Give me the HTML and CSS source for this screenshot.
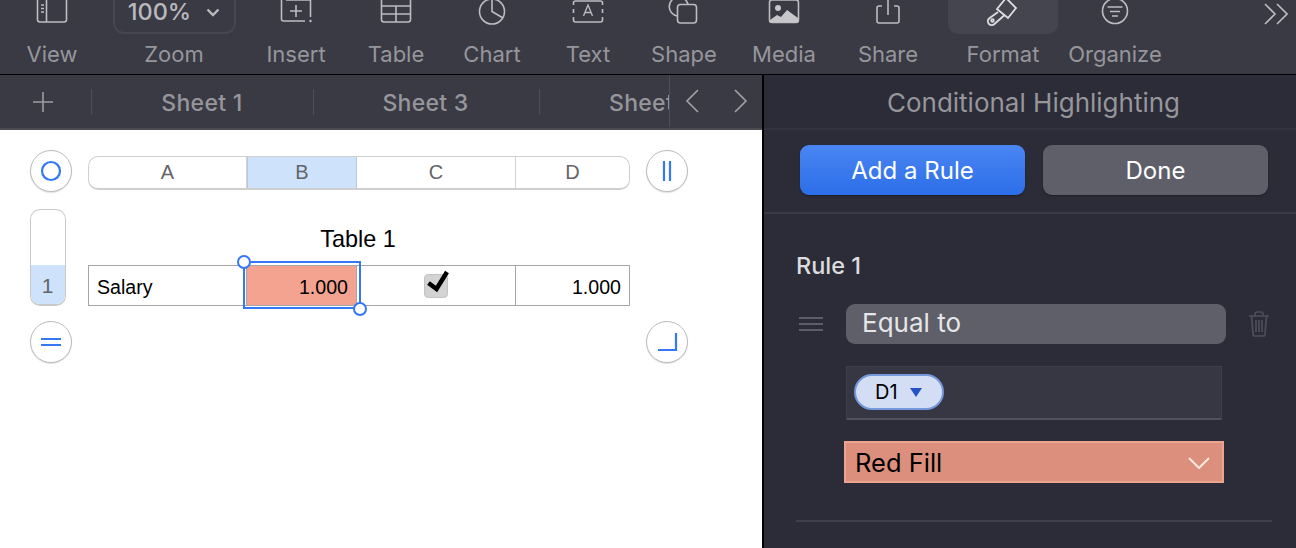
FILE: index.html
```html
<!DOCTYPE html>
<html lang="en">
<head>
<meta charset="utf-8">
<title>Conditional Highlighting</title>
<link rel="stylesheet" href="styles.css">
</head>
<body>
<div class="app">
  <header class="toolbar">
    <div class="tool tool-view"><svg class="ticon" viewBox="0 0 40 34"><rect x="5.5" y="-2" width="29" height="24" rx="2.5"/><path d="M14.5-2V22M9 5h3M9 8.5h3M9 12h3"/></svg><span class="tool-label">View</span></div>
    <div class="tool tool-zoom"><div class="zoom-box"><span class="zoom-value">100%</span><svg class="zoom-chev" viewBox="0 0 14 9"><path d="M1.5 1.5L7 7l5.5-5.5"/></svg></div><span class="tool-label">Zoom</span></div>
    <div class="tool tool-insert"><svg class="ticon" viewBox="0 0 40 34"><path d="M5.500 0V19a2 2 0 0 0 2 2H29M10 0H34M34.500 0V17M14 11H26M20 5V17"/><circle cx="34.500" cy="21" r="1.200" class="fill"/></svg><span class="tool-label">Insert</span></div>
    <div class="tool tool-table"><svg class="ticon" viewBox="0 0 40 34"><rect x="5.500" y="-3" width="29" height="25" rx="2.500"/><path d="M5.500 6H34.500M5.500 14H34.500M20 6V22"/></svg><span class="tool-label">Table</span></div>
    <div class="tool tool-chart"><svg class="ticon" viewBox="0 0 40 34"><circle cx="20" cy="11.500" r="12.500"/><path d="M20-1V11.500L31 18"/></svg><span class="tool-label">Chart</span></div>
    <div class="tool tool-text"><svg class="ticon" viewBox="0 0 40 34"><path d="M5.500 5V3a2 2 0 0 1 2-2H32.500a2 2 0 0 1 2 2V5M5.500 9V13M5.500 17V20a2 2 0 0 0 2 2H32.500a2 2 0 0 0 2-2V17M34.500 13V9"/><path d="M15.500 16L20 5l4.500 11M17 12.500H23" class="thin"/></svg><span class="tool-label">Text</span></div>
    <div class="tool tool-shape"><svg class="ticon" viewBox="0 0 40 34"><rect x="13.500" y="4.500" width="19" height="18.500" rx="3"/><path d="M13.500 16A9.500 9.500 0 1 1 24 4.500"/></svg><span class="tool-label">Shape</span></div>
    <div class="tool tool-media"><svg class="ticon" viewBox="0 0 40 34"><rect x="5.500" y="0" width="29" height="22.500" rx="2.500"/><path class="solid" d="M6 22.500V20L13 15 17 17 23 10 34 18V22.500Z"/><circle class="solid" cx="14" cy="8" r="3"/></svg><span class="tool-label">Media</span></div>
    <div class="tool tool-share"><svg class="ticon" viewBox="0 0 40 34"><path d="M14 6H11a2 2 0 0 0-2 2V21a2 2 0 0 0 2 2H29a2 2 0 0 0 2-2V8a2 2 0 0 0-2-2H26M20 15V-2"/></svg><span class="tool-label">Share</span></div>
    <div class="tool tool-format"><div class="format-box"><svg class="ticon brush" viewBox="0 0 40 34"><path d="M14 9L23-2 33 8 25 18ZM15 12L6 18.500a3.800 3.800 0 0 0 5.500 5.500L21 15.500"/><circle cx="9.500" cy="20.500" r="1.300"/></svg></div><span class="tool-label">Format</span></div>
    <div class="tool tool-organize"><svg class="ticon" viewBox="0 0 40 34"><circle cx="20" cy="11" r="12.500"/><path d="M12.500 7H27.500M15 11.500H25M17 16H23"/></svg><span class="tool-label">Organize</span></div>
    <div class="tool tool-more"><svg class="more" viewBox="0 0 24 22"><path d="M1 1L11 11 1 21M13 1L23 11 13 21"/></svg></div>
  </header>
  <main class="workspace">
    <section class="canvas-pane">
      <nav class="sheetbar">
        <div class="sheet-add"><svg class="plus" viewBox="0 0 22 22"><path d="M11 1V21M1 11H21"/></svg></div>
        <div class="sheet-tab sheet-one">Sheet 1</div>
        <div class="sheet-tab sheet-three">Sheet 3</div>
        <div class="sheet-tab sheet-cut">Sheet</div>
        <div class="sheet-nav">
          <svg class="nav-arrow" viewBox="0 0 14 24"><path d="M13 1L2 12 13 23"/></svg>
          <svg class="nav-arrow" viewBox="0 0 14 24"><path d="M1 1L12 12 1 23"/></svg>
        </div>
      </nav>
      <div class="sheet">
        <div class="row-top">
          <div class="round"><svg viewBox="0 0 42 42"><circle cx="21" cy="21" r="9"/></svg></div>
          <div class="col-head">
            <div class="col col-a">A</div>
            <div class="col col-b active">B</div>
            <div class="col col-c">C</div>
            <div class="col col-d">D</div>
          </div>
          <div class="round"><svg viewBox="0 0 42 42"><path d="M18 11V31M24 11V31"/></svg></div>
        </div>
        <div class="row-middle">
          <div class="row-head"><div class="row-head-blank"></div><div class="row-head-one">1</div></div>
          <div class="table-wrap">
            <div class="table-title">Table 1</div>
            <div class="table-row">
              <div class="cell col-a cell-left">Salary</div>
              <div class="cell col-b cell-red">1.000
                <span class="selection"></span><span class="handle handle-start"></span><span class="handle handle-end"></span>
              </div>
              <div class="cell col-c cell-check"><span class="checkbox"></span><svg class="check" viewBox="0 0 26 28"><path d="M5.500 15L13.500 21 24 4"/></svg></div>
              <div class="cell col-d">1.000</div>
            </div>
          </div>
        </div>
        <div class="row-bottom">
          <div class="round"><svg viewBox="0 0 42 42"><path d="M11 18H31M11 24H31"/></svg></div>
          <div class="round"><svg viewBox="0 0 42 42"><path d="M12 29H30V12"/></svg></div>
        </div>
      </div>
    </section>
    <aside class="panel">
      <div class="panel-title">Conditional Highlighting</div>
      <div class="panel-actions">
        <button class="btn btn-blue">Add a Rule</button>
        <button class="btn btn-gray">Done</button>
      </div>
      <div class="rule">
        <div class="rule-name">Rule 1</div>
        <div class="rule-line">
          <svg class="grip" viewBox="0 0 24 14"><path d="M0 1H24M0 7H24M0 13H24"/></svg>
          <div class="rule-select">Equal to</div>
          <svg class="trash" viewBox="0 0 22 26"><path d="M1 5H21M7 5V3a2 2 0 0 1 2-2h4a2 2 0 0 1 2 2V5M3.500 5L5 23a2 2 0 0 0 2 2H15a2 2 0 0 0 2-2L18.500 5M8 9V21M11 9V21M14 9V21"/></svg>
        </div>
        <div class="formula"><span class="pill">D1<span class="pill-caret"></span></span></div>
        <div class="fill-select"><span>Red Fill</span><svg class="fill-chev" viewBox="0 0 22 12"><path d="M1 1L11 11 21 1"/></svg></div>
        <div class="rule-divider"></div>
      </div>
    </aside>
  </main>
</div>
</body>
</html>
```
FILE: styles.css
```css
* { box-sizing: border-box; }
html, body { margin: 0; padding: 0; }
body { width: 1296px; height: 548px; overflow: hidden; background: #fff; font-family: "Inter", "Liberation Sans", sans-serif; }
.app { display: flex; flex-direction: column; width: 1296px; height: 548px; overflow: hidden; }

.toolbar { display: grid; grid-template-columns: 104px 140px 104px 96px 96px 96px 96px 104px 104px 126px 98px 132px; height: 75px; flex: none; background: #3a3a44; border-bottom: 1px solid #000; overflow: hidden; }
.tool { display: flex; flex-direction: column; align-items: center; height: 74px; }
.ticon { display: block; width: 40px; height: 34px; overflow: visible; fill: none; stroke: #bcbcc2; stroke-width: 1.6; flex: none; }
.ticon .fill { fill: #bcbcc2; stroke: none; }
.ticon .solid { fill: #c6c6cb; stroke: none; }
.ticon .thin { stroke-width: 1.3; }
.brush { stroke: #dcdce0; stroke-width: 1.800; }
.tool-label { display: block; margin-top: 7px; height: 26px; line-height: 26px; font-size: 22px; color: #96969b; white-space: nowrap; }
.zoom-box { display: flex; align-items: flex-start; justify-content: center; gap: 15px; width: 123px; height: 34px; border: 2px solid #45464f; border-top: 0; border-radius: 0 0 11px 11px; flex: none; }
.zoom-value { font-size: 23.500px; line-height: 24px; font-weight: 500; color: #b9b9be; }
.zoom-chev { width: 14px; height: 9px; margin-top: 8px; fill: none; stroke: #b9b9be; stroke-width: 2.400; }
.format-box { display: flex; justify-content: center; width: 110px; height: 34px; background: #45454f; border-radius: 0 0 10px 10px; flex: none; }
.tool-more { align-items: flex-end; padding: 3px 8px 0 0; }
.more { width: 24px; height: 22px; fill: none; stroke: #bcbcc2; stroke-width: 1.600; }

.workspace { display: flex; flex: 1; min-height: 0; }
.canvas-pane { width: 762px; flex: none; background: #fff; }
.sheetbar { display: flex; position: relative; height: 55px; background: #3a3a44; border-bottom: 2px solid #4a4a52; overflow: hidden; }
.sheet-add { display: flex; align-items: center; justify-content: center; width: 92px; height: 53px; flex: none; padding-right: 6px; position: relative; }
.plus { width: 22px; height: 22px; fill: none; stroke: #9d9da3; stroke-width: 1.600; }
.sheet-tab { display: flex; align-items: center; justify-content: center; height: 53px; padding-top: 2px; flex: none; font-size: 23px; font-weight: 500; letter-spacing: 0.300px; color: #96969b; white-space: nowrap; position: relative; }
.sheet-add::after, .sheet-one::after, .sheet-three::after { content: ""; position: absolute; right: 0; top: 14px; width: 1.500px; height: 26px; background: #4e4e57; }
.sheet-one { width: 222px; padding-right: 2px; }
.sheet-three { width: 226px; padding-right: 3px; }
.sheet-cut { width: 130px; justify-content: flex-start; padding-left: 69px; overflow: hidden; }
.sheet-nav { position: absolute; left: 669px; top: 0; right: 0; height: 52px; display: flex; align-items: center; justify-content: flex-start; gap: 35px; padding-left: 15px; background: #3a3a44; border-left: 1.500px solid #4e4e57; }
.nav-arrow { width: 14px; height: 24px; fill: none; stroke: #a2a2a7; stroke-width: 1.600; }

.sheet { padding: 20px 0 0 30px; }
.row-top { display: flex; align-items: center; gap: 16px; width: 658px; }
.round { width: 42px; height: 42px; flex: none; border: 1px solid #bcbcbc; border-radius: 50%; box-shadow: 0 1px 1px rgba(0,0,0,.12); background: #fff; }
.round svg { display: block; width: 42px; height: 42px; margin: -1px; fill: none; stroke: #3478f6; stroke-width: 2.200; }
.col-head { display: flex; width: 542px; height: 34px; margin-top: 4px; border: 1px solid #cfcfcf; border-bottom-width: 2px; border-radius: 10px; overflow: hidden; background: #fff; font-family: "Liberation Sans", Arial, sans-serif; font-size: 20px; color: #646468; }
.col { display: flex; align-items: center; justify-content: center; flex: none; border-right: 1px solid #d2d2d2; }
.col-a { width: 159px; }
.col-b { width: 110px; }
.col-c { width: 159px; }
.col-d { width: 114px; border-right: 0; }
.col-head .col-a { width: 158px; }
.col-head .active { background: #cfe2fb; border-left: 1px solid #b5c9e2; border-right-color: #b5c9e2; }
.col-head .col-d { width: 113px; }
.row-middle { display: flex; margin-top: 17px; }
.row-head { width: 36px; height: 97px; flex: none; margin-right: 22px; display: flex; flex-direction: column; border: 1px solid #c9c9c9; border-bottom-width: 2px; border-radius: 10px; overflow: hidden; }
.row-head-blank { height: 55px; flex: none; }
.row-head-one { flex: 1; display: flex; align-items: center; justify-content: center; padding: 2px 1px 0 0; background: #cfe2fb; font-family: "Liberation Sans", Arial, sans-serif; font-size: 21px; color: #646468; }
.table-wrap { width: 542px; flex: none; }
.table-title { height: 56px; padding: 16px 2px 0 0; text-align: center; font-family: "Liberation Sans", Arial, sans-serif; font-size: 23.400px; line-height: 29px; color: #000; }
.table-row { display: flex; height: 41px; border: 1px solid #a6a6a6; font-family: "Liberation Sans", Arial, sans-serif; font-size: 19.600px; color: #000; background: #fff; }
.cell { position: relative; display: flex; align-items: center; justify-content: flex-end; flex: none; padding: 3px 8px 0 0; border-right: 1px solid #a6a6a6; }
.table-row .col-a { width: 158px; }
.table-row .col-d { width: 113px; border-right: 0; }
.cell-left { justify-content: flex-start; padding: 3px 0 0 8px; }
.cell-red { background: #f3a390; }
.cell-check { justify-content: center; padding: 0; }
.checkbox { width: 24px; height: 24px; background: #d3d3d3; border: 1px solid #c3c3c3; border-radius: 4px; margin-top: 1px; }
.check { position: absolute; left: 66px; top: 2px; width: 26px; height: 28px; fill: none; stroke: #000; stroke-width: 4.500; }
.selection { position: absolute; left: -4px; top: -5px; width: 118px; height: 48px; border: 2px solid #3478f6; }
.handle { position: absolute; width: 14px; height: 14px; background: #fff; border: 2.500px solid #3478f6; border-radius: 50%; }
.handle-start { left: -10px; top: -11px; }
.handle-end { left: 106px; top: 36px; }
.row-bottom { display: flex; justify-content: space-between; width: 658px; margin-top: 15px; }

.panel { flex: 1; background: #2b2c38; border-left: 2px solid #000; color: #fff; min-width: 0; }
.panel-title { height: 55px; display: flex; align-items: center; justify-content: center; padding: 1px 0 0 7px; font-size: 26px; color: #96969b; border-bottom: 2px solid #33343f; }
.panel-actions { display: flex; gap: 18px; padding: 15px 0 17px 36px; border-bottom: 2px solid #3a3b46; }
.btn { width: 225px; height: 50px; padding: 1px 0 0; border: 0; border-radius: 9px; font-family: "Inter", "Liberation Sans", sans-serif; font-size: 24px; font-weight: 400; color: #fff; box-shadow: 0 1px 2px rgba(0,0,0,.35); }
.btn-blue { background: linear-gradient(#4a86f3, #2c6ee8); }
.btn-gray { background: #5e5f68; }
.rule { padding: 38px 24px 0 32px; }
.rule-name { height: 28px; line-height: 28px; font-size: 23.500px; font-weight: 500; color: #dcdcdf; }
.rule-line { display: flex; align-items: center; margin-top: 24px; height: 40px; }
.grip { width: 24px; height: 14px; margin: 0 0 0 3px; flex: none; fill: none; stroke: #6d6e76; stroke-width: 1.500; }
.rule-select { width: 380px; height: 40px; margin-left: 23px; flex: none; padding-left: 16px; line-height: 38px; background: #5e5f68; border-radius: 9px; font-size: 26px; color: #e6e6e9; }
.trash { width: 22px; height: 26px; margin-left: 22px; flex: none; fill: none; stroke: #4d4e59; stroke-width: 1.700; }
.formula { width: 376px; height: 54px; margin: 22px 0 0 50px; padding: 7px 0 0 7px; background: #363742; border: 1px solid #3d3e49; border-bottom: 2px solid #50515b; }
.pill { display: flex; align-items: center; width: 90px; height: 36px; padding-left: 19px; background: #d3def5; border: 2px solid #7498dc; border-radius: 18px; font-size: 20px; color: #000; }
.pill-caret { width: 0; height: 0; margin-left: 12px; border-style: solid; border-width: 9px 6px 0; border-color: #2451c5 transparent transparent; }
.fill-select { display: flex; align-items: center; justify-content: space-between; width: 380px; height: 42px; margin: 21px 0 0 48px; padding: 0 12px 0 9px; background: #dc8f7c; border: 2px solid #eba48f; font-size: 25.500px; color: #000; }
.fill-chev { width: 22px; height: 12px; fill: none; stroke: #fbe9e4; stroke-width: 2; margin-top: 2px; }
.rule-divider { width: 476px; height: 2px; margin-top: 37px; background: #3e3f4a; }
```
